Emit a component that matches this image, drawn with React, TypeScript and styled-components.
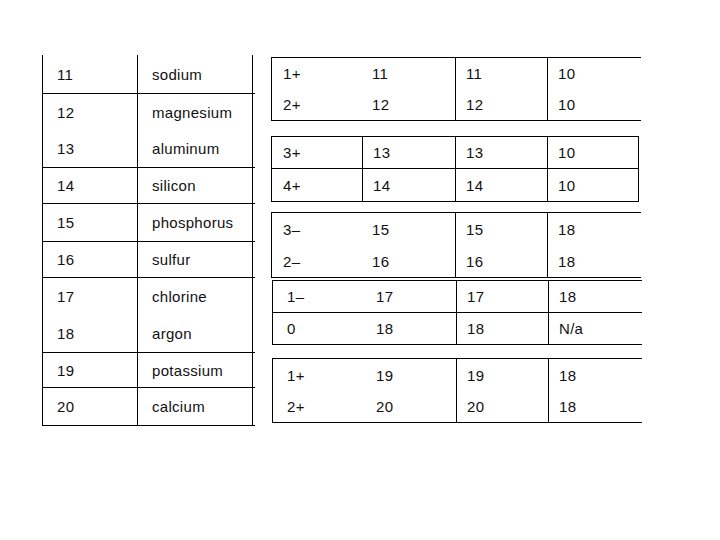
import styled, { createGlobalStyle } from "styled-components";

const GlobalStyle = createGlobalStyle`
  html, body {
    margin: 0;
    padding: 0;
    background: #ffffff;
  }
  body {
    font-family: "Liberation Sans", Arial, sans-serif;
    color: #111111;
  }
`;

const Slide = styled.div`
  width: 720px;
  height: 540px;
  box-sizing: border-box;
  display: flex;
  align-items: flex-start;
  padding: 55px 0 0 42px;
  background: #ffffff;
`;

const ElementTable = styled.div`
  width: 209px;
  display: flex;
  flex-direction: column;
  border-left: 1px solid #000;
  border-right: 1px solid #000;
`;

const Group = styled.div<{ $h: number }>`
  height: ${p => p.$h}px;
  box-sizing: border-box;
  display: flex;
  flex-direction: column;
  border-bottom: 1px solid #000;
  margin-right: -3px;
`;

const ElementRow = styled.div`
  flex: 1;
  display: grid;
  grid-template-columns: 94px 1fr;
`;

const Text = styled.div<{ $pad: number; $divider?: boolean }>`
  display: flex;
  align-items: center;
  padding-left: ${p => p.$pad}px;
  font-size: 15px;
  letter-spacing: 0.3px;
  border-left: ${p => (p.$divider ? "1px solid #000" : "none")};
`;

const IonColumn = styled.div`
  margin-left: 18px;
  display: flex;
  flex-direction: column;
  width: 372px;
`;

const IonBlock = styled.div<{ $top: number; $shift: number; $closed?: boolean }>`
  margin-top: ${p => p.$top}px;
  margin-left: ${p => p.$shift}px;
  display: flex;
  flex-direction: column;
  border-top: 1px solid #000;
  border-bottom: 1px solid #000;
  border-left: 1px solid #000;
  border-right: ${p => (p.$closed ? "1px solid #000" : "none")};
  width: ${p => (p.$closed ? "366px" : "369px")};
`;

const IonRow = styled.div<{ $h: number; $line?: boolean }>`
  height: ${p => p.$h}px;
  box-sizing: border-box;
  display: grid;
  grid-template-columns: 90px 93px 92px 1fr;
  border-top: ${p => (p.$line ? "1px solid #000" : "none")};
`;

type Element = [string, string];

const groups: { h: number; rows: Element[] }[] = [
  { h: 39, rows: [["11", "sodium"]] },
  { h: 74, rows: [["12", "magnesium"], ["13", "aluminum"]] },
  { h: 36, rows: [["14", "silicon"]] },
  { h: 38, rows: [["15", "phosphorus"]] },
  { h: 36, rows: [["16", "sulfur"]] },
  { h: 75, rows: [["17", "chlorine"], ["18", "argon"]] },
  { h: 35, rows: [["19", "potassium"]] },
  { h: 38, rows: [["20", "calcium"]] },
];

type IonBlockData = {
  top: number;
  shift: number;
  closed?: boolean;
  firstDivider?: boolean;
  midLine?: boolean;
  heights: [number, number];
  pad: number;
  rows: string[][];
};

const blocks: IonBlockData[] = [
  { top: 2, shift: 0, heights: [30, 32], pad: 11, rows: [["1+", "11", "11", "10"], ["2+", "12", "12", "10"]] },
  { top: 15, shift: 0, closed: true, firstDivider: true, midLine: true, heights: [31, 33], pad: 11, rows: [["3+", "13", "13", "10"], ["4+", "14", "14", "10"]] },
  { top: 10, shift: 0, heights: [33, 31], pad: 11, rows: [["3\u2013", "15", "15", "18"], ["2\u2013", "16", "16", "18"]] },
  { top: 2, shift: 1, midLine: true, heights: [31, 32], pad: 14, rows: [["1\u2013", "17", "17", "18"], ["0", "18", "18", "N/a"]] },
  { top: 13, shift: 1, heights: [32, 31], pad: 14, rows: [["1+", "19", "19", "18"], ["2+", "20", "20", "18"]] },
];

export default function App() {
  return (
    <>
      <GlobalStyle />
      <Slide>
        <ElementTable>
          {groups.map((g, gi) => (
            <Group key={gi} $h={g.h}>
              {g.rows.map(([num, name]) => (
                <ElementRow key={num}>
                  <Text $pad={14}>{num}</Text>
                  <Text $pad={14} $divider>{name}</Text>
                </ElementRow>
              ))}
            </Group>
          ))}
        </ElementTable>
        <IonColumn>
          {blocks.map((b, bi) => (
            <IonBlock key={bi} $top={b.top} $shift={b.shift} $closed={b.closed}>
              {b.rows.map((cells, ri) => (
                <IonRow key={ri} $h={b.heights[ri]} $line={b.midLine && ri === 1}>
                  {cells.map((c, ci) => (
                    <Text
                      key={ci}
                      $pad={ci === 0 ? b.pad : ci === 1 ? b.pad - 1 : 10}
                      $divider={ci === 2 || ci === 3 || (ci === 1 && b.firstDivider)}
                    >
                      {c}
                    </Text>
                  ))}
                </IonRow>
              ))}
            </IonBlock>
          ))}
        </IonColumn>
      </Slide>
    </>
  );
}
